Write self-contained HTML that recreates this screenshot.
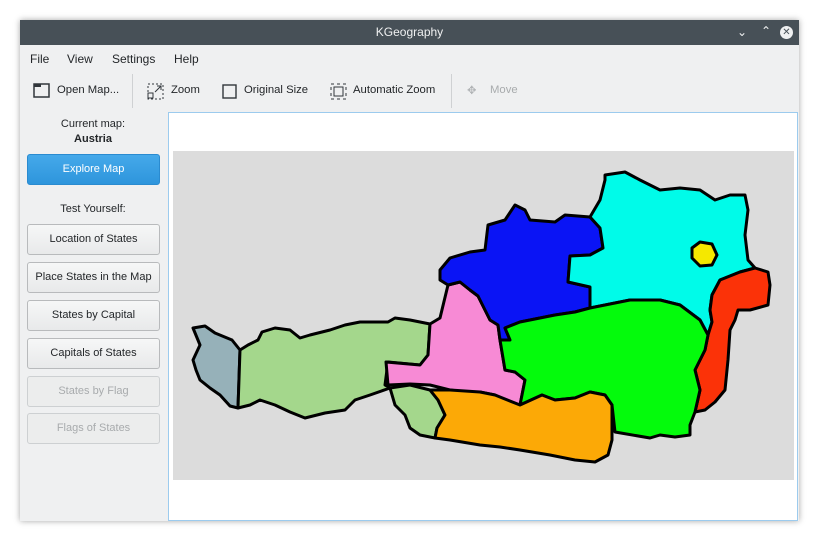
<!DOCTYPE html>
<html><head><style>
body{margin:0;width:819px;height:542px;background:#fff;position:relative;overflow:hidden;font-family:"Liberation Sans","DejaVu Sans",sans-serif;font-size:11px;color:#232629}
.win{position:absolute;left:20px;top:20px;width:779px;height:501px;background:#eff0f1;box-shadow:0 0 6px rgba(0,0,0,.35)}
.title{position:absolute;left:0;top:0;width:779px;height:25px;background:#475057;color:#eff0f1;text-align:center;line-height:25px;font-size:12px}
.menu{position:absolute;top:32px;font-size:12px}
.tb{position:absolute;top:64px;font-size:11.3px}
.sep{position:absolute;top:54px;width:1px;height:34px;background:#cfd1d3}
.btn{position:absolute;left:7px;width:131px;height:29px;border:1px solid #b8babc;border-radius:3px;background:linear-gradient(#f6f7f7,#e8e9ea);text-align:center;line-height:29px;font-size:11px}
.dis{color:#a8abad;border-color:#cdd0d2;background:#eceded}
.lbl{position:absolute;left:0;width:146px;text-align:center}
</style></head><body>
<div class="win">
<div class="title">KGeography<span style="position:absolute;right:52px;top:0">⌄</span><span style="position:absolute;right:28px;top:-1px">⌃</span><span style="position:absolute;right:6px;top:6px;width:13px;height:13px;border-radius:50%;background:#eff0f1;color:#475057;font-size:10px;line-height:13px">✕</span></div>
<span class="menu" style="left:10px">File</span><span class="menu" style="left:47px">View</span><span class="menu" style="left:92px">Settings</span><span class="menu" style="left:154px">Help</span>
<svg style="position:absolute;left:13px;top:63px" width="18" height="16"><rect x="1" y="1" width="15" height="13" fill="none" stroke="#31363b" stroke-width="1.5"/><rect x="1" y="1" width="7" height="3" fill="#31363b"/></svg>
<span class="tb" style="left:37px">Open Map...</span>
<div class="sep" style="left:112px"></div>
<svg style="position:absolute;left:127px;top:63px" width="18" height="17"><rect x="1" y="1" width="15" height="15" fill="none" stroke="#31363b" stroke-dasharray="2,2"/><rect x="1" y="10" width="5" height="5" fill="none" stroke="#31363b"/><path d="M8 9L14 3M10 3h4v4" stroke="#31363b" fill="none"/></svg>
<span class="tb" style="left:151px">Zoom</span>
<svg style="position:absolute;left:201px;top:63px" width="18" height="17"><rect x="2" y="2" width="13" height="13" fill="none" stroke="#31363b" stroke-width="1.4"/></svg>
<span class="tb" style="left:224px">Original Size</span>
<svg style="position:absolute;left:310px;top:63px" width="18" height="17"><rect x="1" y="1" width="15" height="15" fill="none" stroke="#31363b" stroke-dasharray="3,3"/><rect x="4" y="4" width="9" height="9" fill="none" stroke="#31363b"/></svg>
<span class="tb" style="left:333px">Automatic Zoom</span>
<div class="sep" style="left:431px"></div>
<span class="tb" style="left:447px;color:#b0b3b5">✥</span><span class="tb" style="left:470px;color:#a8abad">Move</span>
<div class="lbl" style="top:98px">Current map:</div>
<div class="lbl" style="top:113px;font-weight:bold">Austria</div>
<div class="btn" style="top:134px;background:linear-gradient(#45a9ea,#2e95dc);border-color:#2a8bd0;color:#fff">Explore Map</div>
<div class="lbl" style="top:183px">Test Yourself:</div>
<div class="btn" style="top:204px">Location of States</div>
<div class="btn" style="top:242px">Place States in the Map</div>
<div class="btn" style="top:280px">States by Capital</div>
<div class="btn" style="top:318px">Capitals of States</div>
<div class="btn dis" style="top:356px">States by Flag</div>
<div class="btn dis" style="top:393px">Flags of States</div>
<div style="position:absolute;left:148px;top:92px;width:628px;height:407px;border:1px solid #9ccbee;background:#fff"></div>
</div>
<svg style="position:absolute;left:0;top:0" width="819" height="542">
<rect x="173" y="151" width="621" height="329" fill="#dcdcdc"/>
<g stroke="#000" stroke-width="3" stroke-linejoin="round">
<polygon fill="#96b1b9" points="193,328 205,326 215,333 232,340 240,350 238,408 230,406 220,395 210,388 200,380 196,370 193,360 200,345"/>
<polygon fill="#a4d78c" points="240,350 248,345 258,340 262,332 275,328 290,330 300,338 310,335 330,330 345,325 360,322 388,322 395,318 410,320 430,324 428,355 420,365 388,362 385,385 390,388 370,395 355,400 345,410 325,413 305,418 290,412 275,405 260,400 250,405 238,408"/>
<polygon fill="#a4d78c" points="390,388 410,385 430,390 438,400 445,415 437,428 435,438 420,435 410,428 405,415 395,405"/>
<polygon fill="#f78ad5" points="430,324 440,318 448,285 460,282 470,290 478,296 490,320 498,325 500,340 505,370 515,372 525,380 522,395 520,405 505,400 495,395 480,392 465,392 450,390 430,385 410,384 388,385 386,362 420,365 428,355"/>
<polygon fill="#0a14f5" points="440,270 450,258 470,252 485,250 488,225 505,220 515,205 525,210 530,220 555,222 565,215 590,217 600,228 603,248 590,255 570,256 568,282 590,287 590,308 575,312 555,315 520,322 505,328 510,340 500,340 498,325 490,320 478,296 470,290 460,282 448,285 440,280"/>
<polygon fill="#00fbe9" points="590,217 600,200 605,180 605,175 625,172 640,180 660,190 680,188 700,190 715,200 730,195 745,195 748,210 745,235 748,260 755,268 740,272 720,280 712,295 710,310 712,322 708,335 700,320 680,305 660,300 630,300 605,305 590,308 590,287 568,282 570,256 590,255 603,248 600,228"/>
<polygon fill="#f5e800" points="692,248 700,242 712,244 717,255 712,265 700,266 692,258"/>
<polygon fill="#fb3208" points="755,268 768,272 770,285 768,305 750,310 738,310 735,320 730,330 728,360 725,390 715,402 705,410 695,412 700,390 695,370 705,350 708,335 712,322 710,310 712,295 720,280 740,272"/>
<polygon fill="#04fb0c" points="505,328 520,322 555,315 575,312 590,308 605,305 630,300 660,300 680,305 700,320 708,335 705,350 695,370 700,390 695,412 690,425 690,435 675,437 660,435 650,438 615,432 612,405 605,395 590,392 575,398 555,400 542,395 520,405 522,395 525,380 515,372 505,370 500,340 510,340"/>
<polygon fill="#fca906" points="430,390 450,390 480,392 495,395 520,405 542,395 555,400 575,398 590,392 605,395 612,405 612,440 608,455 595,462 575,460 550,455 520,450 500,447 480,445 450,440 435,438 437,428 445,415 438,400"/>
</g></svg>
</body></html>
